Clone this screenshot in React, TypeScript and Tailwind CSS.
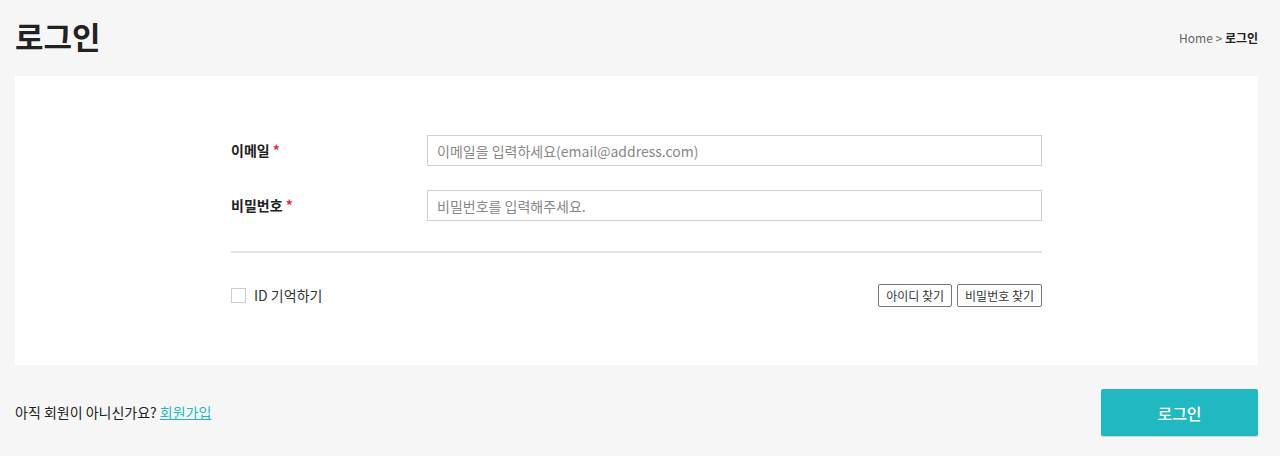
import React from "react";

const font = { fontFamily: '"Noto Sans CJK KR", "Noto Sans", sans-serif' };

export default function App() {
  return (
    <div className="min-h-[456px] w-[1280px] bg-[#f6f6f6] pl-[15px] pr-[22px]" style={font}>
      <div className="flex h-[76px] items-center justify-between">
        <h1 className="mt-[-6px] text-[31px] font-bold leading-none text-[#222]">로그인</h1>
        <div className="text-[12px] text-[#666]">
          Home &gt; <span className="font-bold text-[#222]">로그인</span>
        </div>
      </div>
      <div className="flex h-[289px] justify-center bg-white pt-[59px]">
        <div className="w-[811px]">
          <div className="flex h-[31px] items-center">
            <label className="w-[196px] text-[14px] font-bold text-[#222]">
              이메일 <span className="text-[#e03030]">*</span>
            </label>
            <input
              className="h-[31px] flex-1 border border-[#cfcfcf] px-[9px] text-[14px] text-[#333] outline-none placeholder:text-[#888]"
              placeholder="이메일을 입력하세요(email@address.com)"
            />
          </div>
          <div className="mt-[24px] flex h-[31px] items-center">
            <label className="w-[196px] text-[14px] font-bold text-[#222]">
              비밀번호 <span className="text-[#e03030]">*</span>
            </label>
            <input
              type="password"
              className="h-[31px] flex-1 border border-[#cfcfcf] px-[9px] text-[14px] text-[#333] outline-none placeholder:text-[#888]"
              placeholder="비밀번호를 입력해주세요."
            />
          </div>
          <div className="mt-[30px] h-[2px] bg-[#e2e2e2]" />
          <div className="mt-[31px] flex h-[23px] items-center justify-between">
            <label className="flex items-center">
              <span className="h-[15px] w-[15px] border border-[#cccccc] bg-white" />
              <span className="ml-[8px] text-[14px] text-[#333]">ID 기억하기</span>
            </label>
            <div className="flex gap-[5px]">
              <button className="h-[23px] rounded-[2px] border border-[#777] bg-white px-[7px] text-[12px] text-[#333]">
                아이디 찾기
              </button>
              <button className="h-[23px] rounded-[2px] border border-[#777] bg-white px-[7px] text-[12px] text-[#333]">
                비밀번호 찾기
              </button>
            </div>
          </div>
        </div>
      </div>
      <div className="flex items-center justify-between pt-[24px]">
        <div className="text-[14px] text-[#222]">
          아직 회원이 아니신가요?{" "}
          <a href="#" className="text-[#1fb8c0] underline">회원가입</a>
        </div>
        <button className="h-[47px] w-[157px] rounded-[2px] bg-[#20b9c1] text-[16px] font-medium text-white shadow-[0_1px_1px_rgba(0,0,0,0.15)]">
          로그인
        </button>
      </div>
    </div>
  );
}
